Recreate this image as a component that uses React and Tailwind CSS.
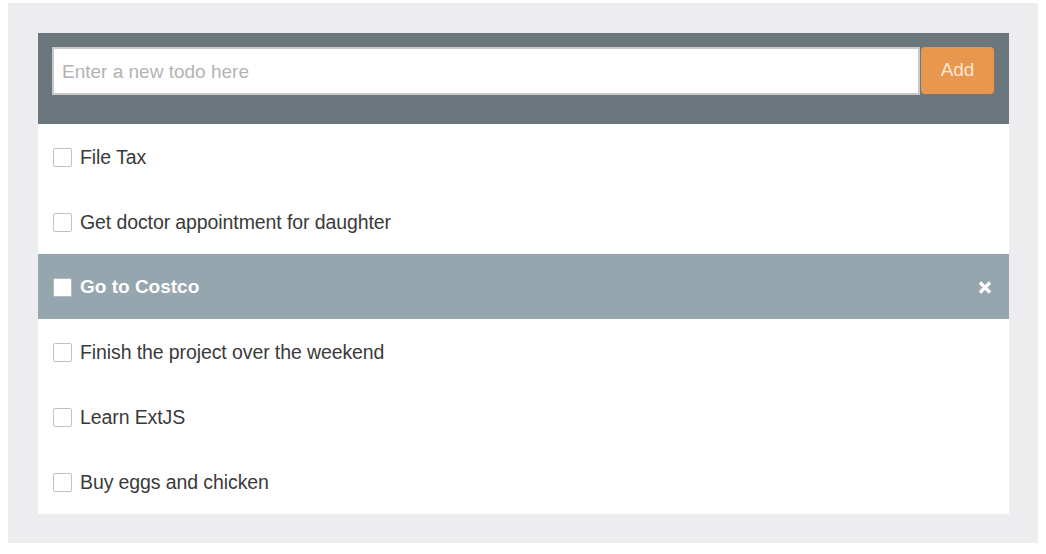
import { useState } from "react";

const initialTodos = [
  { id: 1, text: "File Tax" },
  { id: 2, text: "Get doctor appointment for daughter" },
  { id: 3, text: "Go to Costco" },
  { id: 4, text: "Finish the project over the weekend" },
  { id: 5, text: "Learn ExtJS" },
  { id: 6, text: "Buy eggs and chicken" },
];

const CloseIcon = () => (
  <svg width="14" height="13" viewBox="0 0 14 13" fill="none">
    <path d="M2 1.5 L12 11.5 M12 1.5 L2 11.5" stroke="white" strokeWidth="3.4" />
  </svg>
);

const TodoRow = ({ todo, active, onHover }) => {
  return (
    <div
      onMouseEnter={onHover}
      className={
        active
          ? "h-[65px] flex items-center pl-[15px] pr-[17px] pt-[2px] bg-[#95a6af]"
          : "h-[65px] flex items-center pl-[15px] pr-[17px] pt-[2px] bg-white"
      }
    >
      <span
        className={
          active
            ? "w-[19px] h-[19px] rounded-[2px] border border-[#b5bbbe] bg-white"
            : "w-[19px] h-[19px] rounded-[2px] border border-[#c2c2c2] bg-white"
        }
      />
      <span
        className={
          active
            ? "ml-[8px] text-[19px] font-bold text-white"
            : "ml-[8px] text-[19.5px] tracking-[-0.1px] text-[#3a3a3a]"
        }
      >
        {todo.text}
      </span>
      {active && (
        <button className="ml-auto flex items-center">
          <CloseIcon />
        </button>
      )}
    </div>
  );
};

const App = () => {
  const [todos] = useState(initialTodos);
  const [newTodo, setNewTodo] = useState("");
  const [hovered, setHovered] = useState(3);

  return (
    <div
      className="w-[1046px] h-[554px] bg-white pt-[3px] pl-2"
      style={{ fontFamily: '"Liberation Sans", Arial, sans-serif' }}
    >
      <div className="w-[1030px] h-[540px] bg-[#ededef] p-[30px] pr-[29px]">
        <div className="bg-white">
          <div className="h-[91px] bg-[#6c777d] pl-[14px] pr-[15px] pt-[14px] flex items-start">
            <input
              type="text"
              value={newTodo}
              onChange={(e) => setNewTodo(e.target.value)}
              placeholder="Enter a new todo here"
              className="w-[869px] h-[48px] bg-white border-2 border-[#c9c9c9] pl-[8px] pt-[2px] text-[19px] text-[#333] placeholder:text-[#b3b3b3] outline-none"
            />
            <button className="w-[73px] h-[47px] ml-[1px] bg-[#e8974e] rounded-[4px] text-[19px] text-[#fbe6d3]">
              Add
            </button>
          </div>
          {todos.map((todo) => (
            <TodoRow
              key={todo.id}
              todo={todo}
              active={hovered === todo.id}
              onHover={() => setHovered(todo.id)}
            />
          ))}
        </div>
      </div>
    </div>
  );
};

export default App;
